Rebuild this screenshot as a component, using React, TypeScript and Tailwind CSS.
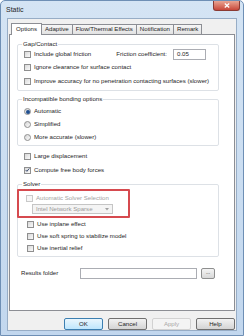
import React from 'react';

const FONT = "font-['Liberation_Sans',Arial,sans-serif]";

function CheckBox({ checked = false, disabled = false }: { checked?: boolean; disabled?: boolean }) {
  return (
    <span
      className={`w-[7px] h-[7px] shrink-0 flex items-center justify-center border ${
        disabled
          ? 'border-[#c9c9c9] bg-[#f6f6f6]'
          : 'border-[#8f8f8f] bg-gradient-to-br from-[#d8d8d8] to-[#fafafa]'
      }`}
    >
      {checked && (
        <svg width="6" height="6" viewBox="0 0 6 6">
          <path d="M0.8 3 L2.3 4.6 L5.2 1.1" fill="none" stroke="#2c3e66" strokeWidth="1.1" />
        </svg>
      )}
    </span>
  );
}

function Radio({ checked = false }: { checked?: boolean }) {
  return (
    <span className="w-[7px] h-[7px] shrink-0 rounded-full border border-[#8f8f8f] bg-gradient-to-br from-[#d6d6d6] to-[#fbfbfb] flex items-center justify-center">
      {checked && <span className="w-[4px] h-[4px] rounded-full bg-[#1f4f8f]" />}
    </span>
  );
}

function Row({
  children,
  h = 'h-[13px]',
  className = '',
}: {
  children: React.ReactNode;
  h?: string;
  className?: string;
}) {
  return <div className={`flex items-center gap-[3px] ${h} ${className}`}>{children}</div>;
}

function Group({ title, children, className = '' }: { title: string; children: React.ReactNode; className?: string }) {
  return (
    <fieldset className={`border border-[#dde1e6] rounded-[2px] mr-[15px] ${className}`}>
      <legend className="ml-[4px] px-[1px] leading-[8px] text-[#1e1e1e]">{title}</legend>
      {children}
    </fieldset>
  );
}

function DlgButton({ label, primary = false, disabled = false }: { label: string; primary?: boolean; disabled?: boolean }) {
  return (
    <div
      className={`w-[39px] h-[12px] rounded-[2px] border flex items-center justify-center ${
        primary
          ? 'border-[#3c7fb1] bg-gradient-to-b from-[#eaf6fd] to-[#bee6fd] text-[#1e1e1e]'
          : disabled
          ? 'border-[#d2d2d2] bg-[#f4f4f4] text-[#a8a8a8]'
          : 'border-[#707070] bg-gradient-to-b from-[#f2f2f2] to-[#d4d4d4] text-[#1e1e1e]'
      }`}
    >
      {label}
    </div>
  );
}

const tabs = ['Options', 'Adaptive', 'Flow/Thermal Effects', 'Notification', 'Remark'];

export default function App() {
  return (
    <div className={`${FONT} w-[244px] h-[336px] text-[6.1px] leading-none text-[#1e1e1e] bg-gradient-to-b from-[#d4e4f4] to-[#c2d7ee] border border-[#6e8fb5] rounded-t-[5px] flex flex-col overflow-hidden`}>
      {/* Title bar */}
      <div className="h-[17px] flex items-start justify-between shrink-0">
        <span className="pl-[5px] pt-[5px] text-[7px] text-[#1e1e1e]">Static</span>
        <div className="mr-[3px] w-[27px] h-[10px] rounded-b-[3px] border border-t-0 border-[#8a3a33] bg-gradient-to-b from-[#e8a493] to-[#c7463a] flex items-center justify-center">
          <svg width="6" height="5" viewBox="0 0 6 5">
            <path d="M0.8 0.6 L5.2 4.4 M5.2 0.6 L0.8 4.4" stroke="#ffffff" strokeWidth="1.3" />
          </svg>
        </div>
      </div>

      {/* Client area */}
      <div className="mx-[6px] mb-[4px] flex-1 bg-[#f0f0f0] border border-[#97adc6] flex flex-col px-[1px]">
        {/* Tabs */}
        <div className="flex items-end h-[14px] pl-[2px] mt-[1px]">
          {tabs.map((t, i) =>
            i === 0 ? (
              <div
                key={t}
                className="h-[12px] px-[4px] bg-white border border-b-0 border-[#8c8e94] flex items-center -mb-[1px] relative z-10"
              >
                {t}
              </div>
            ) : (
              <div
                key={t}
                className="h-[10px] px-[3px] bg-gradient-to-b from-[#f6f6f6] to-[#e2e2e2] border border-l-0 border-b-0 border-[#8c8e94] flex items-center"
              >
                {t}
              </div>
            )
          )}
        </div>

        {/* Tab panel */}
        <div className="h-[277px] bg-white border border-[#8c8e94] pl-[7px] flex flex-col">
          <Group title="Gap/Contact" className="mt-[5px] pb-[2px]">
            <Row className="pl-[6px]">
              <CheckBox />
              <span>Include global friction</span>
              <span className="ml-auto">Friction coefficient:</span>
              <span className="ml-[3px] mr-[12px] w-[33px] h-[11px] border border-[#abadb3] flex items-center pl-[3px]">0.05</span>
            </Row>
            <Row className="pl-[6px]">
              <CheckBox />
              <span>Ignore clearance for surface contact</span>
            </Row>
            <Row className="pl-[6px]" h="h-[14px]">
              <CheckBox />
              <span>Improve accuracy for no penetration contacting surfaces (slower)</span>
            </Row>
          </Group>

          <Group title="Incompatible bonding options" className="mt-[4px] pt-[2px] pb-[1px]">
            <Row className="pl-[6px]">
              <Radio checked />
              <span>Automatic</span>
            </Row>
            <Row className="pl-[6px]">
              <Radio />
              <span>Simplified</span>
            </Row>
            <Row className="pl-[6px]">
              <Radio />
              <span>More accurate (slower)</span>
            </Row>
          </Group>

          <Row className="pl-[7px] mt-[3px]" h="h-[14px]">
            <CheckBox />
            <span>Large displacement</span>
          </Row>
          <Row className="pl-[7px]" h="h-[14px]">
            <CheckBox checked />
            <span>Compute free body forces</span>
          </Row>

          <Group title="Solver" className="mt-[3px] pb-[2px]">
            <div className="-ml-[1px] mt-[1px] w-[113px] h-[29px] border-[2px] border-[#d64a4f] rounded-[1px] flex flex-col pl-[7px]">
              <Row h="h-[12px]" className="mt-[1px]">
                <CheckBox disabled />
                <span className="text-[#a3a3a3]">Automatic Solver Selection</span>
              </Row>
              <div className="ml-[6px] w-[81px] h-[10px] border border-[#c5c5c5] bg-[#f4f4f4] flex items-center justify-between px-[3px] text-[#9a9a9a]">
                <span>Intel Network Sparse</span>
                <svg width="4" height="3" viewBox="0 0 4 3">
                  <path d="M0 0 L4 0 L2 2.5 Z" fill="#a0a0a0" />
                </svg>
              </div>
            </div>
            <Row h="h-[12px]" className="pl-[9px]">
              <CheckBox />
              <span>Use inplane effect</span>
            </Row>
            <Row h="h-[12px]" className="pl-[9px]">
              <CheckBox />
              <span>Use soft spring to stabilize model</span>
            </Row>
            <Row h="h-[12px]" className="pl-[9px]">
              <CheckBox />
              <span>Use inertial relief</span>
            </Row>
          </Group>

          <div className="flex items-center h-[12px] mt-[10px] pl-[4px]">
            <span className="w-[59px]">Results folder</span>
            <span className="w-[117px] h-[11px] border border-[#abadb3] bg-white" />
            <span className="ml-[4px] w-[14px] h-[11px] border border-[#8e8f8f] rounded-[2px] bg-gradient-to-b from-[#f4f4f4] to-[#d8d8d8] flex items-center justify-center text-[5px] pb-[2px]">
              ...
            </span>
          </div>
        </div>

        {/* Buttons */}
        <div className="flex justify-end gap-[5px] mt-[7px]">
          <DlgButton label="OK" primary />
          <DlgButton label="Cancel" />
          <DlgButton label="Apply" disabled />
          <DlgButton label="Help" />
        </div>
      </div>
    </div>
  );
}
